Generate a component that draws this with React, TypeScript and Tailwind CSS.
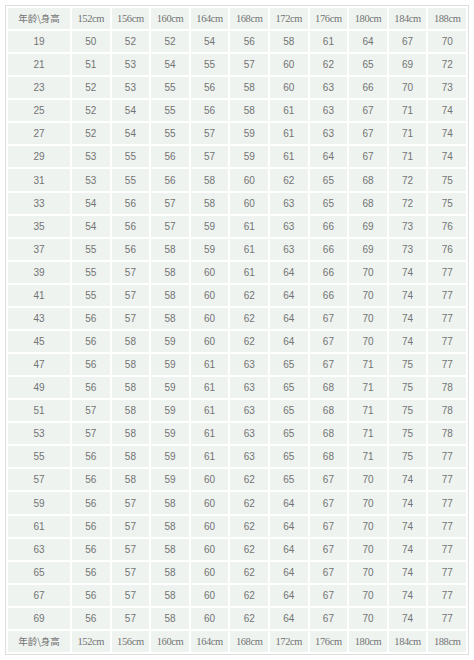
import React from "react";

const heights = ["152cm","156cm","160cm","164cm","168cm","172cm","176cm","180cm","184cm","188cm"];
const tail = [56,57,58,60,62,64,67,70,74,77];
const rows: [number, number[]][] = [
  [19,[50,52,52,54,56,58,61,64,67,70]],
  [21,[51,53,54,55,57,60,62,65,69,72]],
  [23,[52,53,55,56,58,60,63,66,70,73]],
  [25,[52,54,55,56,58,61,63,67,71,74]],
  [27,[52,54,55,57,59,61,63,67,71,74]],
  [29,[53,55,56,57,59,61,64,67,71,74]],
  [31,[53,55,56,58,60,62,65,68,72,75]],
  [33,[54,56,57,58,60,63,65,68,72,75]],
  [35,[54,56,57,59,61,63,66,69,73,76]],
  [37,[55,56,58,59,61,63,66,69,73,76]],
  [39,[55,57,58,60,61,64,66,70,74,77]],
  [41,[55,57,58,60,62,64,66,70,74,77]],
  [43,[56,57,58,60,62,64,67,70,74,77]],
  [45,[56,58,59,60,62,64,67,70,74,77]],
  [47,[56,58,59,61,63,65,67,71,75,77]],
  [49,[56,58,59,61,63,65,68,71,75,78]],
  [51,[57,58,59,61,63,65,68,71,75,78]],
  [53,[57,58,59,61,63,65,68,71,75,78]],
  [55,[56,58,59,61,63,65,68,71,75,77]],
  [57,[56,58,59,60,62,65,67,70,74,77]],
  [59,tail],
  [61,tail],
  [63,tail],
  [65,tail],
  [67,tail],
  [69,tail],
];

const cell = "flex items-center justify-center bg-[#eef3f0] text-[#737373]";
const sans = "text-[10px] [font-family:'Liberation_Sans',Arial,sans-serif]";
const serif = "text-[10.5px] tracking-[-0.4px] [font-family:'Liberation_Serif','Times_New_Roman',serif]";
const cjk = "text-[9.5px] [font-family:'Noto_Sans_CJK_SC',sans-serif]";

function HeaderRow() {
  return (
    <>
      <div className={`${cell} ${cjk}`}>年龄\身高</div>
      {heights.map((h) => (
        <div key={h} className={`${cell} ${serif}`}>{h}</div>
      ))}
    </>
  );
}

export default function App() {
  return (
    <div className="w-[474px] h-[660px] bg-white p-[5px]">
      <div className="h-full border border-[#dedede] p-[2px]">
        <div className="grid h-full grid-cols-[62px_repeat(10,1fr)] grid-rows-[repeat(28,1fr)] gap-[2px]">
          <HeaderRow />
          {rows.map(([age, vals]) => (
            <React.Fragment key={age}>
              <div className={`${cell} ${sans}`}>{age}</div>
              {vals.map((v, i) => (
                <div key={i} className={`${cell} ${sans}`}>{v}</div>
              ))}
            </React.Fragment>
          ))}
          <HeaderRow />
        </div>
      </div>
    </div>
  );
}
